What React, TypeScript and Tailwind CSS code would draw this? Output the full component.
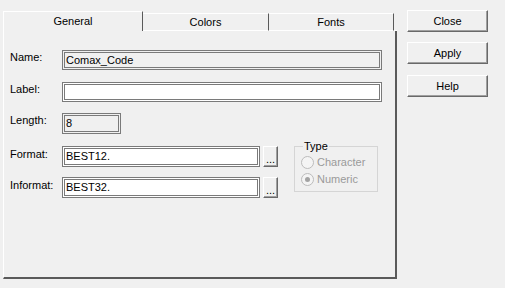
import React from "react";

const btn =
  "flex items-center justify-center bg-[#f0f0f0] border border-t-white border-l-white border-r-[#696969] border-b-[#696969] shadow-[inset_-1px_-1px_0_#a0a0a0]";

const edit = "border-[3px] border-double border-[#7a7a7a] flex items-center pl-[1px]";

function Radio({ label, checked }: { label: string; checked?: boolean }) {
  return (
    <div className="flex items-center h-[15px]">
      <div className="w-[13px] h-[13px] rounded-full border border-[#bcbcbc] bg-[#f4f4f4] flex items-center justify-center">
        {checked && <div className="w-[5px] h-[5px] rounded-full bg-[#a3a3a3]" />}
      </div>
      <span className="ml-[3px] text-[#9a9a9a]">{label}</span>
    </div>
  );
}

export default function App() {
  return (
    <div className="w-[505px] h-[288px] bg-[#f0f0f0] flex pl-[3px] pt-[11px] font-['Liberation_Sans',Arial,sans-serif] text-[11px] text-black leading-[13px]">
      <div className="flex flex-col w-[394px]">
        <div className="flex items-end h-[20px]">
          <div className="w-[140px] h-[20px] border-t border-l border-white border-r border-r-[#5a5a5a] flex items-center justify-center">
            General
          </div>
          <div className="w-[126px] h-[18px] border-t border-b border-white border-r border-r-[#5a5a5a] flex items-center justify-center">
            Colors
          </div>
          <div className="w-[125px] h-[18px] border-t border-b border-white border-r border-r-[#5a5a5a] flex items-center justify-center">
            Fonts
          </div>
          <div className="flex-1 h-[1px] border-b border-white" />
        </div>
        <div className="h-[248px] border-l border-white border-r-2 border-b-2 border-r-[#5a5a5a] border-b-[#5a5a5a] pl-[6px] pt-[19px] flex flex-col">
          <div className="flex items-start h-[20px]">
            <div className="w-[52px] mt-[1px]">Name:</div>
            <div className={`${edit} w-[320px] h-[20px] bg-[#f0f0f0]`}>Comax_Code</div>
          </div>
          <div className="flex items-start h-[20px] mt-[12px]">
            <div className="w-[52px] mt-[1px]">Label:</div>
            <div className={`${edit} w-[320px] h-[20px] bg-white`} />
          </div>
          <div className="flex items-start h-[21px] mt-[11px]">
            <div className="w-[52px] mt-[1px]">Length:</div>
            <div className={`${edit} w-[59px] h-[21px] bg-[#f0f0f0]`}>8</div>
          </div>
          <div className="flex mt-[12px]">
            <div className="flex flex-col">
              <div className="flex items-start h-[21px]">
                <div className="w-[52px] mt-[2px]">Format:</div>
                <div className={`${edit} w-[198px] h-[21px] bg-white`}>BEST12.</div>
                <div className={`${btn} w-[15px] h-[21px] ml-[3px] items-end pb-[4px] leading-[6px]`}>...</div>
              </div>
              <div className="flex items-start h-[21px] mt-[10px]">
                <div className="w-[52px] mt-[2px]">Informat:</div>
                <div className={`${edit} w-[198px] h-[21px] bg-white`}>BEST32.</div>
                <div className={`${btn} w-[15px] h-[21px] ml-[3px] items-end pb-[4px] leading-[6px]`}>...</div>
              </div>
            </div>
            <fieldset className="ml-[16px] -mt-[6px] self-start w-[84px] border border-[#d5d5d5] pl-[6px] pb-[4px]">
              <legend className="ml-[2px] px-[1px]">Type</legend>
              <div className="mt-[2px] flex flex-col gap-[2px]">
                <Radio label="Character" />
                <Radio label="Numeric" checked />
              </div>
            </fieldset>
          </div>
        </div>
      </div>
      <div className="ml-[10px] -mt-[1px] flex flex-col">
        <div className={`${btn} w-[81px] h-[22px]`}>Close</div>
        <div className={`${btn} w-[81px] h-[22px] mt-[10px]`}>Apply</div>
        <div className={`${btn} w-[81px] h-[22px] mt-[11px]`}>Help</div>
      </div>
    </div>
  );
}
